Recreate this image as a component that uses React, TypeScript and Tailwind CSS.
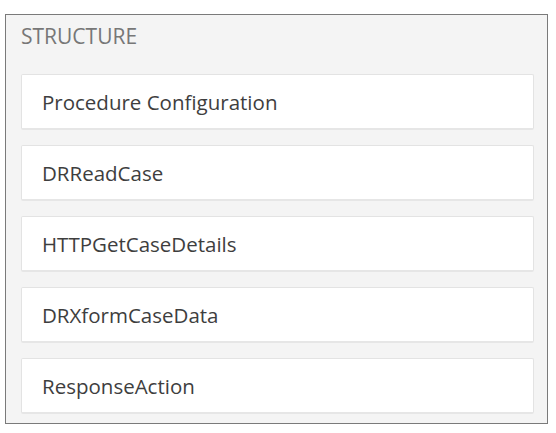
const steps = [
  "Procedure Configuration",
  "DRReadCase",
  "HTTPGetCaseDetails",
  "DRXformCaseData",
  "ResponseAction",
];

export default function App() {
  return (
    <main
      className="min-h-screen bg-white pl-[5px] pt-[14px]"
      style={{ fontFamily: '"Open Sans", "Liberation Sans", sans-serif' }}
    >
      <div className="w-[543px] h-[410px] border border-[#7a7a7a] bg-[#f4f4f4] pl-[15px] pr-[13px] pt-[8px]">
        {/* Header */}
        <h2 className="text-[21px] leading-[26px] text-[#777777] mb-[25px]">
          STRUCTURE
        </h2>

        {/* Steps */}
        <div className="flex flex-col gap-[15px]">
          {steps.map((name) => (
            <div
              key={name}
              className="h-[56px] flex items-center bg-white border border-[#e3e3e3] border-b-2 border-b-[#e6e6e6] rounded-[2px] pl-[20px] pt-[2px] text-[20.5px] text-[#3e3e3e]"
            >
              {name}
            </div>
          ))}
        </div>
      </div>
    </main>
  );
}
